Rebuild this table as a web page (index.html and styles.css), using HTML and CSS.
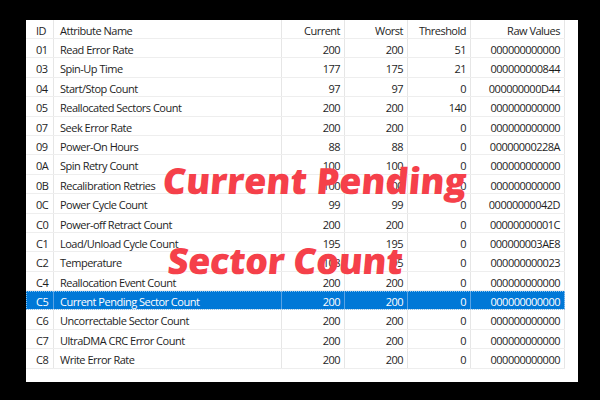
FILE: index.html
```html
<!DOCTYPE html>
<html>
<head>
<meta charset="utf-8">
<link rel="stylesheet" href="styles.css">
</head>
<body>
<div class="frame">
  <div class="panel">
    <div class="grid">
      <div class="row head"><div class="c id">ID</div><div class="c name">Attribute Name</div><div class="c num">Current</div><div class="c num">Worst</div><div class="c num">Threshold</div><div class="c num raw">Raw Values</div></div>
      <div class="row"><div class="c id">01</div><div class="c name">Read Error Rate</div><div class="c num">200</div><div class="c num">200</div><div class="c num">51</div><div class="c num raw">000000000000</div></div>
      <div class="row"><div class="c id">03</div><div class="c name">Spin-Up Time</div><div class="c num">177</div><div class="c num">175</div><div class="c num">21</div><div class="c num raw">000000000844</div></div>
      <div class="row"><div class="c id">04</div><div class="c name">Start/Stop Count</div><div class="c num">97</div><div class="c num">97</div><div class="c num">0</div><div class="c num raw">000000000D44</div></div>
      <div class="row"><div class="c id">05</div><div class="c name">Reallocated Sectors Count</div><div class="c num">200</div><div class="c num">200</div><div class="c num">140</div><div class="c num raw">000000000000</div></div>
      <div class="row"><div class="c id">07</div><div class="c name">Seek Error Rate</div><div class="c num">200</div><div class="c num">200</div><div class="c num">0</div><div class="c num raw">000000000000</div></div>
      <div class="row"><div class="c id">09</div><div class="c name">Power-On Hours</div><div class="c num">88</div><div class="c num">88</div><div class="c num">0</div><div class="c num raw">00000000228A</div></div>
      <div class="row"><div class="c id">0A</div><div class="c name">Spin Retry Count</div><div class="c num">100</div><div class="c num">100</div><div class="c num">0</div><div class="c num raw">000000000000</div></div>
      <div class="row"><div class="c id">0B</div><div class="c name">Recalibration Retries</div><div class="c num">100</div><div class="c num">100</div><div class="c num">0</div><div class="c num raw">000000000000</div></div>
      <div class="row"><div class="c id">0C</div><div class="c name">Power Cycle Count</div><div class="c num">99</div><div class="c num">99</div><div class="c num">0</div><div class="c num raw">00000000042D</div></div>
      <div class="row"><div class="c id">C0</div><div class="c name">Power-off Retract Count</div><div class="c num">200</div><div class="c num">200</div><div class="c num">0</div><div class="c num raw">00000000001C</div></div>
      <div class="row"><div class="c id">C1</div><div class="c name">Load/Unload Cycle Count</div><div class="c num">195</div><div class="c num">195</div><div class="c num">0</div><div class="c num raw">000000003AE8</div></div>
      <div class="row"><div class="c id">C2</div><div class="c name">Temperature</div><div class="c num">108</div><div class="c num">95</div><div class="c num">0</div><div class="c num raw">000000000023</div></div>
      <div class="row"><div class="c id">C4</div><div class="c name">Reallocation Event Count</div><div class="c num">200</div><div class="c num">200</div><div class="c num">0</div><div class="c num raw">000000000000</div></div>
      <div class="row sel"><div class="c id">C5</div><div class="c name">Current Pending Sector Count</div><div class="c num">200</div><div class="c num">200</div><div class="c num">0</div><div class="c num raw">000000000000</div></div>
      <div class="row"><div class="c id">C6</div><div class="c name">Uncorrectable Sector Count</div><div class="c num">200</div><div class="c num">200</div><div class="c num">0</div><div class="c num raw">000000000000</div></div>
      <div class="row"><div class="c id">C7</div><div class="c name">UltraDMA CRC Error Count</div><div class="c num">200</div><div class="c num">200</div><div class="c num">0</div><div class="c num raw">000000000000</div></div>
      <div class="row"><div class="c id">C8</div><div class="c name">Write Error Rate</div><div class="c num">200</div><div class="c num">200</div><div class="c num">0</div><div class="c num raw">000000000000</div></div>
    </div>
    <div class="overlay o1">Current Pending</div>
    <div class="overlay o2">Sector Count</div>
  </div>
</div>
</body>
</html>
```
FILE: styles.css
```css
html, body {
  margin: 0;
  padding: 0;
  background: #000;
}
.frame {
  width: 600px;
  height: 400px;
  background: #000;
  padding: 20px 22px 18px 26px;
  box-sizing: border-box;
}
.panel {
  position: relative;
  width: 552px;
  height: 362px;
  background: #fff;
  overflow: hidden;
}
.grid {
  width: 539px;
  display: flex;
  flex-direction: column;
  font-family: "Open Sans", sans-serif;
  font-size: 11px;
  letter-spacing: -0.5px;
  color: #1e1e1e;
}
.row {
  display: grid;
  grid-template-columns: 28px 228px 63px 63px 63px 94px;
  height: 19.4px;
  box-sizing: border-box;
  border-bottom: 1px solid #eeeeee;
}
.row.head {
  height: 19px;
}
.c {
  line-height: 21px;
  border-right: 1px solid #e6e6e6;
  white-space: nowrap;
  overflow: hidden;
  box-sizing: border-box;
}
.head .c {
  line-height: 22px;
}
.id {
  padding-left: 10px;
}
.name {
  padding-left: 6px;
}
.num {
  text-align: right;
  padding-right: 4px;
}
.row.sel {
  background: #0078d7;
  color: #fff;
  outline: 1px dotted #8cc4f0;
  outline-offset: -1px;
}
.row.sel .c {
  border-right-color: #5aa3e4;
}
.overlay {
  position: absolute;
  font-family: "Open Sans", sans-serif;
  font-weight: 800;
  font-size: 36px;
  line-height: 1;
  color: #f5404a;
  white-space: nowrap;
  transform: skewX(-5deg);
}
.o1 {
  left: 137px;
  top: 143px;
}
.o2 {
  left: 142px;
  top: 223px;
  letter-spacing: -0.4px;
}
```
